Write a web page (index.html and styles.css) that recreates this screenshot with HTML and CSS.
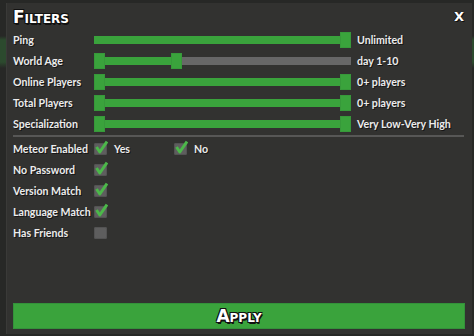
FILE: index.html
```
<!DOCTYPE html>
<html lang="en">

<head>
    <meta charset="UTF-8">
    <meta name="viewport" content="width=device-width, initial-scale=1.0">
    <title>Filters</title>
    <link rel="stylesheet" href="styles.css">
</head>

<body>
    <div class="panel">
        <div class="panel-header">
            <h1 class="title">Filters</h1>
            <span class="close">x</span>
        </div>

        <!-- sliders -->
        <div class="slider-list">
            <div class="slider-row">
                <span class="label">Ping</span>
                <div class="track">
                    <div class="fill" style="width: 246px"></div>
                    <div class="handle"></div>
                </div>
                <span class="value">Unlimited</span>
            </div>
            <div class="slider-row">
                <span class="label">World Age</span>
                <div class="track">
                    <div class="handle"></div>
                    <div class="fill" style="width: 66px"></div>
                    <div class="handle"></div>
                </div>
                <span class="value">day 1-10</span>
            </div>
            <div class="slider-row">
                <span class="label">Online Players</span>
                <div class="track">
                    <div class="handle"></div>
                    <div class="fill" style="width: 235px"></div>
                    <div class="handle"></div>
                </div>
                <span class="value">0+ players</span>
            </div>
            <div class="slider-row">
                <span class="label">Total Players</span>
                <div class="track">
                    <div class="handle"></div>
                    <div class="fill" style="width: 235px"></div>
                    <div class="handle"></div>
                </div>
                <span class="value">0+ players</span>
            </div>
            <div class="slider-row">
                <span class="label">Specialization</span>
                <div class="track">
                    <div class="handle"></div>
                    <div class="fill" style="width: 235px"></div>
                    <div class="handle"></div>
                </div>
                <span class="value">Very Low-Very High</span>
            </div>
        </div>

        <div class="divider"></div>

        <!-- checkboxes -->
        <div class="check-list">
            <div class="check-row">
                <span class="label">Meteor Enabled</span>
                <span class="box checked"></span>
                <span class="option">Yes</span>
                <span class="box checked"></span>
                <span class="option">No</span>
            </div>
            <div class="check-row">
                <span class="label">No Password</span>
                <span class="box checked"></span>
            </div>
            <div class="check-row">
                <span class="label">Version Match</span>
                <span class="box checked"></span>
            </div>
            <div class="check-row">
                <span class="label">Language Match</span>
                <span class="box checked"></span>
            </div>
            <div class="check-row">
                <span class="label">Has Friends</span>
                <span class="box"></span>
            </div>
        </div>

        <button type="button" class="apply">Apply</button>
    </div>
</body>

</html>
```

FILE: styles.css
```
* {
    box-sizing: border-box;
}

body {
    margin: 0;
    padding: 0;
    height: 100vh;
    overflow: hidden;
    font-family: "Lato", "Noto Sans", sans-serif;
    color: #ececec;
    background: linear-gradient(to bottom, #272826 0px, #272826 36px, #2c4a2e 40px, #2c4a2e 62px, #272826 68px);
}

.panel {
    margin: 3px 2px 2px 6px;
    height: 331px;
    background-color: #323230;
    border-left: 1px solid #3a3a38;
    padding: 0 7px 5px 5px;
    display: flex;
    flex-direction: column;
}

.panel-header {
    height: 26px;
    display: flex;
    justify-content: space-between;
    align-items: center;
    padding: 1px 1px 0 1px;
}

.title {
    margin: 0;
    font-family: "DejaVu Sans", sans-serif;
    font-size: 17px;
    font-weight: bold;
    font-variant: small-caps;
    color: #fff;
    text-shadow: -1px -1px 0 #111, 1px -1px 0 #111, -1px 1px 0 #111, 1px 1px 0 #111, 1px 2px 0 #111;
}

.close {
    font-family: "DejaVu Sans", sans-serif;
    font-size: 13px;
    font-weight: bold;
    text-transform: uppercase;
    color: #fff;
    text-shadow: 1px 1px 0 #111, -1px 0 0 #111;
}

.label,
.value,
.option {
    font-size: 10.6px;
    font-weight: bold;
    white-space: nowrap;
    text-shadow: 1px 1px 0 #151515;
}

.label {
    padding-left: 1px;
}

/* sliders */
.slider-row {
    height: 21px;
    display: grid;
    grid-template-columns: 76px 257px auto;
    column-gap: 6px;
    align-items: center;
}

.track {
    height: 8px;
    background-color: #676767;
    display: flex;
    align-items: center;
}

.fill {
    height: 8px;
    background-color: #3aa33c;
}

.handle {
    width: 11px;
    height: 16px;
    flex-shrink: 0;
    background-color: #3aa33c;
    box-shadow: inset 0 0 0 1px #37993a;
}

.divider {
    height: 2px;
    margin: 1px 1px 0 1px;
    background-color: #575756;
}

/* checkboxes */
.check-list {
    padding-top: 1px;
}

.check-row {
    height: 21px;
    display: flex;
    align-items: center;
}

.check-row .label {
    width: 76px;
}

.box {
    position: relative;
    width: 13px;
    height: 12px;
    margin-left: 6px;
    border-radius: 2px;
    background-color: #5e5e5e;
    box-shadow: inset 0 0 0 1px #535353;
}

.box.checked::after {
    content: "";
    position: absolute;
    left: 1px;
    top: -3px;
    width: 13px;
    height: 14px;
    background: url("data:image/svg+xml;utf8,<svg xmlns='http://www.w3.org/2000/svg' viewBox='0 0 13 14'><path d='M1.5 7 L4.8 12 L12 1.5' fill='none' stroke='%234cb84a' stroke-width='3' stroke-linejoin='round'/></svg>") no-repeat;
}

.option {
    margin-left: 7px;
    width: 54px;
}

.apply {
    margin-top: auto;
    margin-left: 1px;
    height: 26px;
    border: none;
    background-color: #3aa33c;
    box-shadow: inset 0 0 0 1px #33923a;
    font-family: "DejaVu Sans", sans-serif;
    font-size: 17px;
    font-weight: bold;
    font-variant: small-caps;
    color: #fff;
    text-shadow: -1px -1px 0 #111, 1px -1px 0 #111, -1px 1px 0 #111, 1px 1px 0 #111, 1px 2px 0 #111;
    cursor: pointer;
}
```
